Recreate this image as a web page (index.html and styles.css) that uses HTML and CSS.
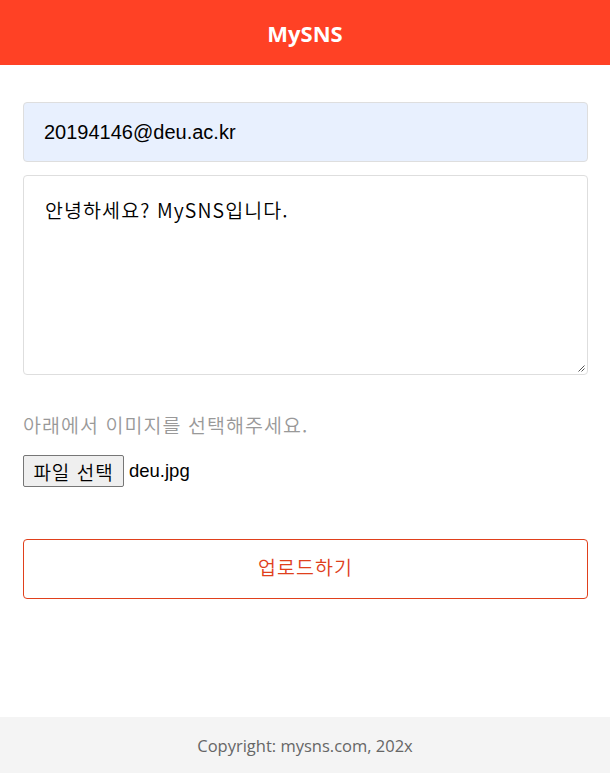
FILE: index.html
```html
<!DOCTYPE html>
<html lang="ko">
<head>
<meta charset="utf-8">
<title>MySNS</title>
<link rel="stylesheet" href="styles.css">
</head>
<body>
<header class="topbar"><h1 class="brand">MySNS</h1></header>
<main class="content">
  <div class="field field-email">20194146@deu.ac.kr</div>
  <div class="field field-text">안녕하세요? MySNS입니다.<span class="grip"><svg width="7" height="7" viewBox="0 0 7 7"><path d="M6.5 0.5 L0.5 6.5 M6.5 3.5 L3.5 6.5" stroke="#555" stroke-width="1"/></svg></span></div>
  <p class="hint">아래에서 이미지를 선택해주세요.</p>
  <div class="file-row"><span class="file-btn">파일 선택</span><span class="file-name">deu.jpg</span></div>
  <div class="upload">업로드하기</div>
</main>
<footer class="footer">Copyright: mysns.com, 202x</footer>
</body>
</html>
```
FILE: styles.css
```css
html, body { margin: 0; padding: 0; }
body {
  width: 610px; height: 773px;
  display: flex; flex-direction: column;
  font-family: "Noto Sans CJK KR", "Noto Sans", sans-serif;
  background: #fff;
}
.topbar {
  height: 65px; background: #ff4125;
  display: flex; align-items: center; justify-content: center;
}
.brand {
  margin: 0; color: #fff; font-family: "Open Sans", "Noto Sans", sans-serif;
  font-weight: 700; font-size: 22px; line-height: 30px;
}
.content {
  flex: 1; padding: 37px 22px 0 23px;
  display: flex; flex-direction: column;
}
.field {
  box-sizing: border-box; border: 1px solid #dedede; border-radius: 4px;
}
.field-email {
  height: 60px; background: #e8f0fe; padding-left: 20px;
  display: flex; align-items: center;
  font-family: "Liberation Sans", Arial, sans-serif; font-size: 20px; color: #000;
}
.field-text {
  position: relative; margin-top: 13px; height: 200px;
  padding: 19px 21px; font-size: 19.5px; color: #000; line-height: 29px;
  font-family: "Noto Sans CJK KR", sans-serif; font-weight: 350; letter-spacing: 1.1px;
}
.grip { position: absolute; right: 2px; bottom: 2px; line-height: 0; }
.hint {
  margin: 35px 0 0 0; color: #999; font-size: 19.5px; line-height: 29px; font-weight: 350; letter-spacing: 1.05px;
}
.file-row { margin-top: 16px; display: flex; align-items: center; }
.file-btn {
  box-sizing: border-box; height: 32px; width: 101px;
  border: 1px solid #767676; border-radius: 2px; background: #efefef;
  display: flex; align-items: center; justify-content: center;
  font-size: 19px; color: #000; font-weight: 350; letter-spacing: 1px;
}
.file-name {
  margin-left: 5px; font-family: "Liberation Sans", Arial, sans-serif; font-size: 18.5px; color: #000;
}
.upload {
  box-sizing: border-box; margin-top: 52px; height: 60px; padding-bottom: 5px;
  border: 1px solid #e0401c; border-radius: 4px;
  display: flex; align-items: center; justify-content: center;
  color: #e0401c; font-size: 19.5px; font-weight: 350; letter-spacing: 1.1px;
}
.footer {
  height: 56px; background: #f4f4f4; color: #666;
  display: flex; align-items: center; justify-content: center;
  font-family: "Open Sans", "Noto Sans", sans-serif; font-size: 16.5px;
}
```
